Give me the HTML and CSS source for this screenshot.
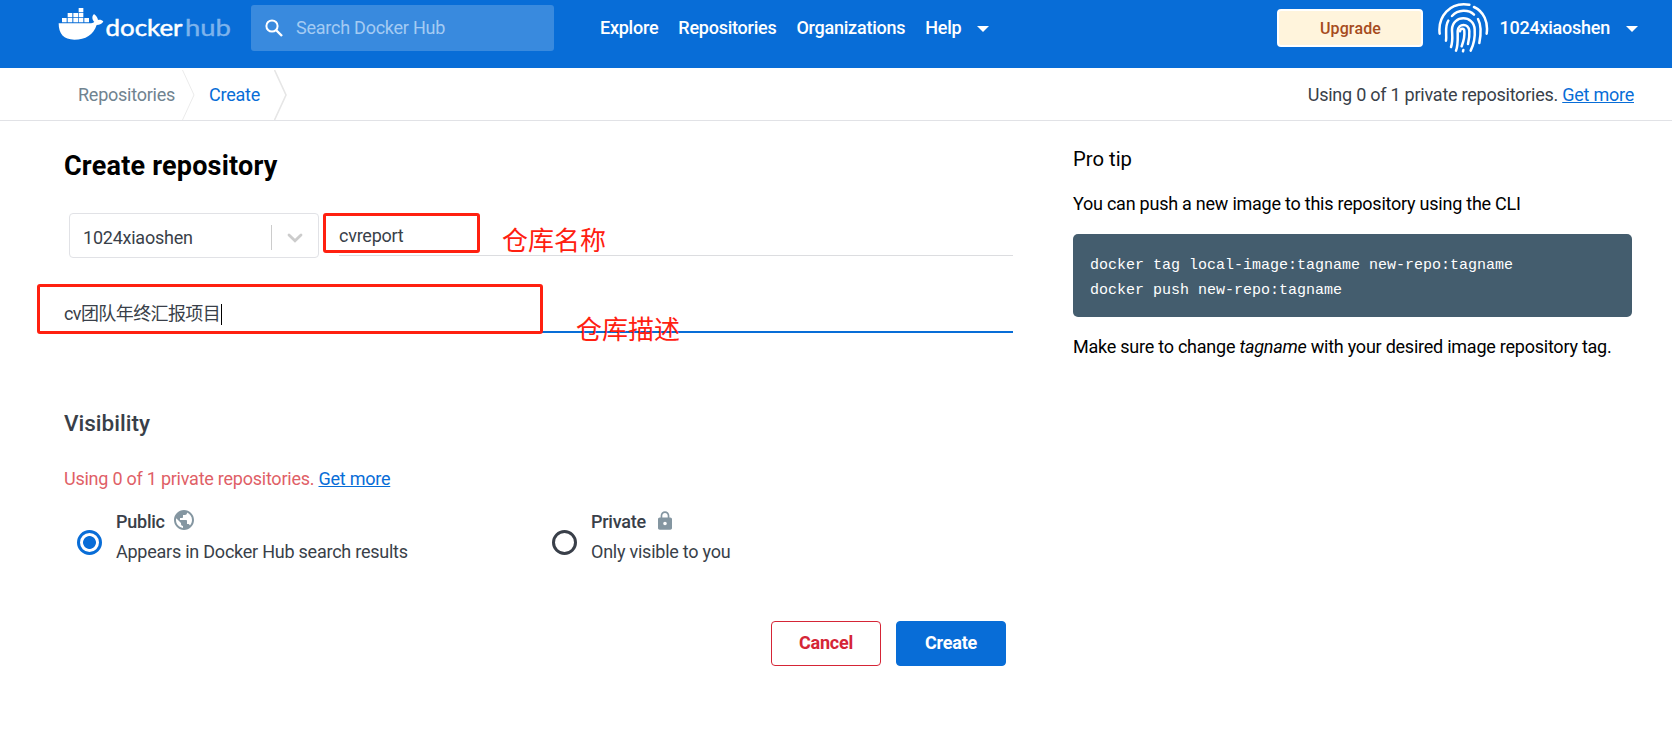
FILE: index.html
```
<!DOCTYPE html>
<html lang="en">

<head>
    <title>Docker Hub - Create repository</title>
    <meta charset="UTF-8" />
    <link rel="stylesheet" href="styles.css">
</head>

<body>
    <header class="header">
        <svg class="header__logo" viewBox="0 0 174 40" width="174" height="40">
            <g transform="scale(.33333) translate(-55 0)" fill="#fff">
                <path d="M57 70H150C156 70 161 68 164 66C157 58 156 49 163 42C171 48 174 54 175 60C181 58 187 60 191 64C188 72 180 75 171 75C161 105 138 119 104 119C72 119 57 102 57 70z" />
                <path d="M67 54h14v13h-14zM84 54h14v13h-14zM101 54h14v13h-14zM117 54h14v13h-14zM134 54h14v13h-14zM84 39h14v13h-14zM101 39h14v13h-14zM117 39h14v13h-14zM117 24h14v13h-14z" />
            </g>
            <text x="47.500" y="35.5" textLength="77" lengthAdjust="spacingAndGlyphs" class="header__logo--docker">docker</text>
            <text x="127" y="35.5" textLength="46" lengthAdjust="spacingAndGlyphs" class="header__logo--hub">hub</text>
        </svg>
        <div class="search">
            <svg viewBox="0 0 18 18" width="18" height="18" fill="none" stroke="#fff" stroke-width="2">
                <circle cx="7" cy="7" r="5.6" />
                <path d="M11 11l6 6" stroke-width="2.4" />
            </svg>
            <span>Search Docker Hub</span>
        </div>
        <nav class="nav">
            <a>Explore</a>
            <a>Repositories</a>
            <a>Organizations</a>
            <a>Help</a>
            <i class="arrow"></i>
        </nav>
        <button class="upgrade">Upgrade</button>
        <svg class="avatar" viewBox="23 6 153 156" width="51" height="52" fill="none" stroke="#fff" stroke-width="7.5" stroke-linecap="round">
            <path d="M28 101C22 50 58 4 117 14M131 21C161 35 174 66 169 101" />
            <path d="M65 48C83 28 115 28 131 44M54 62C42 80 50 102 47 122M143 57C156 80 151 108 147 129" />
            <path d="M62 141C69 120 65 104 65 88C67 44 131 44 133 88C135 115 129 136 121 152" />
            <path d="M77 152C84 136 82 112 82 93C84 69 115 69 117 93C118 108 116 120 113 132" />
            <path d="M89 94C90 84 102 84 102 94C104 112 99 125 94 139M99 150L98 154" />
        </svg>
        <span class="user">1024xiaoshen</span>
        <i class="arrow"></i>
    </header>

    <div class="breadcrumb">
        <span class="breadcrumb__item">Repositories</span>
        <svg viewBox="0 0 13 50" width="13" height="50" fill="none" stroke="#ebebeb">
            <path d="M.5 0L12 25L.5 50" />
        </svg>
        <span class="breadcrumb__item active">Create</span>
        <svg viewBox="0 0 13 50" width="13" height="50" fill="none" stroke="#e6e6e6" stroke-width="1.6">
            <path d="M.5 0L12 25L.5 50" />
        </svg>
        <span class="breadcrumb__usage">Using 0 of 1 private repositories. <a class="link">Get more</a></span>
    </div>

    <div class="content">
        <main class="create">
            <h1>Create repository</h1>
            <div class="create__name">
                <div class="select">
                    <span>1024xiaoshen</span>
                    <i class="select__divider"></i>
                    <svg viewBox="0 0 16 10" width="16" height="10" fill="none" stroke="#ccc" stroke-width="2.8" stroke-linecap="round">
                        <path d="M2 2l6 5.8L14 2" />
                    </svg>
                </div>
                <div class="field">cvreport</div>
                <div class="mark mark--name"></div>
                <span class="note note--name">仓库名称</span>
            </div>
            <div class="create__description">
                <div class="field focused">cv团队年终汇报项目<i class="caret"></i></div>
                <div class="mark mark--description"></div>
                <span class="note note--description">仓库描述</span>
            </div>

            <h2>Visibility</h2>
            <div class="create__usage">Using 0 of 1 private repositories. <a class="link">Get more</a></div>
            <div class="options">
                <div class="option">
                    <i class="radio checked"></i>
                    <div>
                        <div class="option__title">Public
                            <svg class="globe" viewBox="2 2 20 20" width="20" height="20" fill="#8496a1">
                                <path d="M12 2C6.48 2 2 6.48 2 12s4.48 10 10 10 10-4.480 10-10S17.520 2 12 2zm-1 17.930c-3.950-.490-7-3.850-7-7.930 0-.620.080-1.210.210-1.790L9 15v1c0 1.100.9 2 2 2v1.930zm6.900-2.540c-.260-.810-1-1.390-1.900-1.390h-1v-3c0-.550-.450-1-1-1H8v-2h2c.550 0 1-.450 1-1V7h2c1.100 0 2-.9 2-2v-.410c2.930 1.190 5 4.060 5 7.410 0 2.080-.8 3.970-2.100 5.390z" />
                            </svg>
                        </div>
                        <div>Appears in Docker Hub search results</div>
                    </div>
                </div>
                <div class="option">
                    <i class="radio"></i>
                    <div>
                        <div class="option__title">Private
                            <svg class="lock" viewBox="4 1 16 21" width="14" height="19" fill="#8496a1">
                                <path d="M18 8h-1V6c0-2.760-2.240-5-5-5S7 3.240 7 6v2H6c-1.100 0-2 .9-2 2v10c0 1.100.9 2 2 2h12c1.100 0 2-.9 2-2V10c0-1.100-.9-2-2-2zm-6 9c-1.100 0-2-.9-2-2s.9-2 2-2 2 .9 2 2-.9 2-2 2zm3.100-9H8.900V6c0-1.710 1.390-3.100 3.100-3.100s3.100 1.390 3.100 3.100v2z" />
                            </svg>
                        </div>
                        <div>Only visible to you</div>
                    </div>
                </div>
            </div>
            <div class="buttons">
                <button class="buttons__cancel">Cancel</button>
                <button class="buttons__create">Create</button>
            </div>
        </main>

        <aside class="tip">
            <div class="tip__title">Pro tip</div>
            <p>You can push a new image to this repository using the CLI</p>
            <pre>docker tag local-image:tagname new-repo:tagname
docker push new-repo:tagname</pre>
            <p>Make sure to change <em>tagname</em> with your desired image repository tag.</p>
        </aside>
    </div>
</body>

</html>
```

FILE: styles.css
```
:root {
    --blue: #086dd7;
    --text: #393f49;
    --mark: #ff2010;
}

* {
    box-sizing: border-box;
}

body {
    margin: 0;
    font-family: Roboto, "Noto Sans CJK SC", sans-serif;
    font-size: 18px;
    line-height: 22px;
    letter-spacing: -0.24px;
    color: var(--text);
    background-color: white;
}

button {
    font-family: inherit;
    font-weight: 500;
    border-radius: 4px;
    padding: 0;
}

.link {
    color: var(--blue);
    text-decoration: underline;
}

/* Header - START */
.header {
    display: flex;
    align-items: center;
    height: 68px;
    padding: 0 34px 12px 58px;
    background-color: var(--blue);
    color: white;
    font-weight: 500;
}

.header__logo {
    height: 40px;
    align-self: flex-start;
}

.header__logo text {
    font-family: Lato, sans-serif;
    font-size: 24px;
    font-weight: 400;
    letter-spacing: 0;
    fill: white;
}

.header__logo .header__logo--docker {
    stroke: white;
    stroke-width: 0.5px;
}

.header__logo .header__logo--hub {
    fill: #7db3ec;
    stroke: #7db3ec;
    stroke-width: 0.4px;
}

.search {
    display: flex;
    align-items: center;
    gap: 13px;
    width: 303px;
    height: 46px;
    margin-left: 19px;
    padding-left: 14px;
    border-radius: 3px;
    background-color: #398ade;
    color: #a4cbf3;
    font-weight: 400;
}

.nav {
    display: flex;
    align-items: center;
    gap: 20px;
    margin-left: 46px;
}

.arrow {
    border: 6px solid transparent;
    border-top-color: white;
    border-bottom: 0;
    margin-top: 2px;
}

.nav .arrow {
    margin-left: -4px;
}

.upgrade {
    width: 146px;
    height: 38px;
    margin-left: auto;
    border: 2px solid white;
    background-color: #fff4dc;
    color: #a64b1d;
    font-size: 16px;
    letter-spacing: 0.15px;
}

.avatar {
    margin: 0 10px 0 15px;
}

.user {
    margin-right: 16px;
}

/* Header - END */

/* Breadcrumb - START */
.breadcrumb {
    display: flex;
    align-items: center;
    height: 53px;
    padding: 2px 38px 0 78px;
    border-bottom: 1px solid #e1e2e6;
}

.breadcrumb__item {
    color: #708390;
    margin-right: 7px;
}

.breadcrumb__item.active {
    color: var(--blue);
    margin: 0 14px 0 14px;
}

.breadcrumb__usage {
    margin-left: auto;
}

/* Breadcrumb - END */

.content {
    display: flex;
    gap: 60px;
    padding-left: 64px;
}

/* Create repository - START */
.create {
    width: 949px;
    padding-top: 29px;
}

h1 {
    margin: 0 0 31px;
    font-size: 27px;
    line-height: 32px;
    font-weight: 700;
    letter-spacing: 0.2px;
    color: black;
}

.create__name,
.create__description {
    position: relative;
}

.create__name {
    display: flex;
    padding-left: 5px;
    height: 45px;
}

.select {
    display: flex;
    align-items: center;
    width: 250px;
    border: 1px solid #e1e2e6;
    border-radius: 4px;
    padding: 4px 15px 0 13px;
}

.select__divider {
    width: 1px;
    height: 25px;
    margin: 0 15px 0 auto;
    background-color: #ccc;
}

.field {
    height: 40px;
    line-height: 39px;
    border-bottom: 1px solid #dcdde0;
}

.create__name .field {
    flex: 1;
    margin: 3px 0 0 20px;
}

.create__description {
    margin-top: 39px;
}

.field.focused {
    display: flex;
    align-items: center;
    height: 36px;
    line-height: 34px;
    letter-spacing: -0.6px;
    border-bottom: 2px solid var(--blue);
    font-weight: 400;
}

.caret {
    width: 1px;
    height: 21px;
    margin-left: 1px;
    background-color: black;
}

/* hand drawn marks lie over the form */
.mark {
    position: absolute;
    border: 3px solid var(--mark);
    border-radius: 3px;
}

.mark--name {
    left: 259px;
    top: 0;
    width: 157px;
    height: 40px;
}

.mark--description {
    left: -27px;
    top: -13px;
    width: 506px;
    height: 50px;
}

.note {
    position: absolute;
    font-size: 26px;
    line-height: 30px;
    letter-spacing: 0;
    font-weight: 400;
    color: var(--mark);
}

.note--name {
    left: 438px;
    top: 13px;
}

.note--description {
    left: 512px;
    top: 18px;
}

h2 {
    margin: 77px 0 32px;
    font-size: 22.5px;
    line-height: 26px;
    font-weight: 500;
    letter-spacing: 0;
}

.create__usage {
    color: #df5f67;
}

.options {
    display: flex;
    margin: 17px 0 54px 13px;
    line-height: 30px;
}

.option {
    display: flex;
    align-items: center;
    flex-shrink: 0;
    gap: 14px;
    width: 475px;
}

/* second option runs to the edge of the form */
.option:last-child {
    width: 461px;
}

.option__title {
    display: flex;
    align-items: center;
    gap: 9px;
    font-weight: 500;
}

.option__title svg {
    margin-top: -4px;
}

.option__title .lock {
    margin-left: 3px;
}

.radio {
    width: 25px;
    height: 25px;
    margin-top: 10px;
    border: 3px solid var(--text);
    border-radius: 50%;
}

.radio.checked {
    border-color: var(--blue);
    background: radial-gradient(circle, var(--blue) 6px, transparent 6.8px);
}

.buttons {
    display: flex;
    justify-content: flex-end;
    gap: 15px;
    padding-right: 7px;
}

.buttons button {
    width: 110px;
    height: 45px;
    padding-bottom: 2px;
    font-size: 18px;
    font-weight: 700;
    letter-spacing: -0.2px;
    border: 1px solid var(--blue);
}

.buttons .buttons__create {
    background-color: var(--blue);
    color: white;
}

.buttons .buttons__cancel {
    background-color: white;
    border-color: #d52536;
    color: #d52536;
}

/* Create repository - END */

/* Pro tip - START */
.tip {
    width: 559px;
    padding-top: 26px;
    color: black;
}

.tip__title {
    font-size: 20.25px;
    line-height: 24px;
    letter-spacing: 0;
}

.tip p {
    margin: 22px 0 19px;
    white-space: nowrap;
}

.tip pre + p {
    margin-top: 19px;
}

.tip pre {
    height: 83px;
    margin: 0;
    padding: 19px 17px;
    border-radius: 5px;
    background-color: #445d6e;
    color: white;
    font: 15px/25px "Liberation Mono", monospace;
    letter-spacing: 0;
}

/* Pro tip - END */
```
